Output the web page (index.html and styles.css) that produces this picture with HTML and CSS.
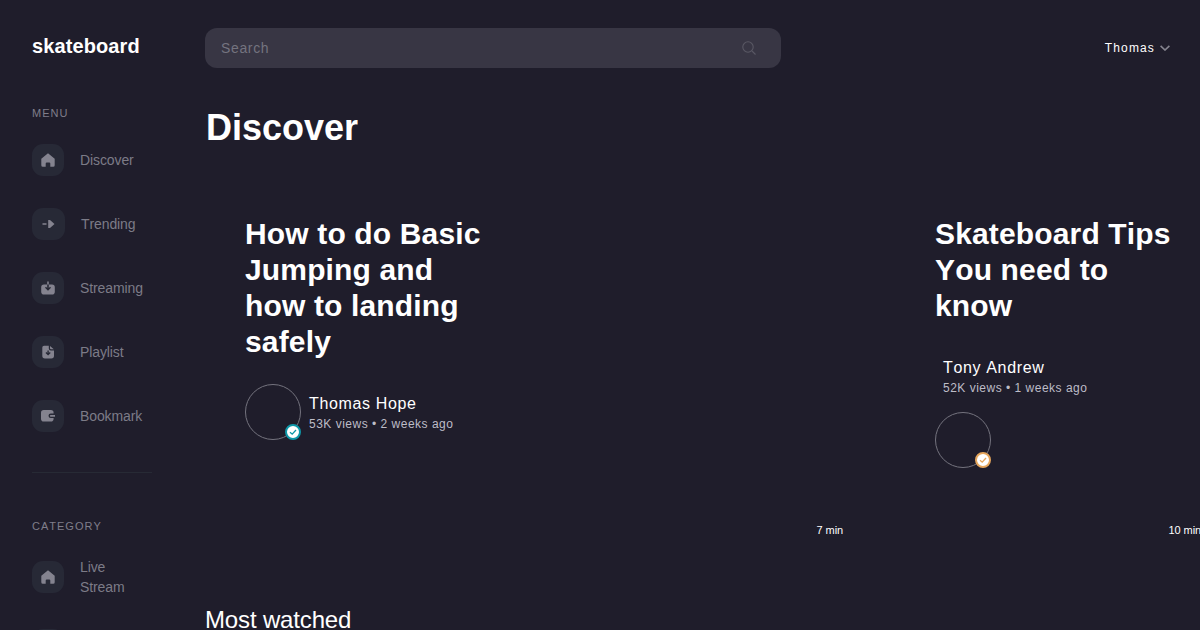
FILE: index.html
```html
<!DOCTYPE html>
<html lang="en">

<head>
    <meta charset="UTF-8">
    <meta name="viewport" content="width=device-width, initial-scale=1.0">
    <title>skateboard</title>
    <link rel="stylesheet" href="styles.css">
</head>

<body>
    <div class="page">
        <aside class="sidebar">
            <div class="logo">skateboard</div>

            <div class="side-title">MENU</div>
            <ul class="side-menu">
                <li class="side-item">
                    <span class="side-icon">
                        <svg width="14" height="14" viewBox="0 0 14 14"><path d="M7 .3 13.700 5.800V12.200a1.500 1.500 0 0 1-1.500 1.500H9.300V10.500a1.100 1.100 0 0 0-1.100-1.100H5.800a1.100 1.100 0 0 0-1.100 1.100v3.200H1.800A1.500 1.500 0 0 1 .3 12.200V5.800z" /></svg>
                    </span>
                    Discover
                </li>
                <li class="side-item wide">
                    <span class="side-icon">
                        <svg width="14" height="14" viewBox="0 0 14 14"><path d="M.5 6.200h4v1.600h-4zM6.200 3h1.400a1 1 0 0 1 .7.300L12.500 7l-4.200 3.700a1 1 0 0 1-.7.300H6.200z" /></svg>
                    </span>
                    Trending
                </li>
                <li class="side-item">
                    <span class="side-icon">
                        <svg width="14" height="14" viewBox="0 0 14 14"><path d="M3 3.500H6.200V7L5 5.800 4 6.800 7 9.800 10 6.800 9 5.800 7.800 7V3.500H11A2.800 2.800 0 0 1 13.800 6.300V10.800A2.800 2.800 0 0 1 11 13.600H3A2.800 2.800 0 0 1 .2 10.800V6.300A2.800 2.800 0 0 1 3 3.500zM6.200 .4h1.600v3.100H6.200z" /></svg>
                    </span>
                    Streaming
                </li>
                <li class="side-item">
                    <span class="side-icon">
                        <svg width="14" height="14" viewBox="0 0 14 14"><path d="M3 .8H7.800V3.400A2 2 0 0 0 9.800 5.400H13V10.800A2.600 2.600 0 0 1 10.400 13.400H3.900A2.600 2.600 0 0 1 1.300 10.800V2.500A1.700 1.700 0 0 1 3 .8zM6.400 5.500V8L5.400 7 4.500 7.900 7.100 10.500 9.700 7.900 8.800 7 7.800 8V5.500zM9 .9 12.800 4.300H10A1 1 0 0 1 9 3.300z" /></svg>
                    </span>
                    Playlist
                </li>
                <li class="side-item">
                    <span class="side-icon">
                        <svg width="14" height="14" viewBox="0 0 14 14"><path fill-rule="evenodd" d="M2.800 1H9.800A2.800 2.800 0 0 1 12.600 3.800V4.500H9.800A2.300 2.300 0 0 0 9.800 9.100H12.600V9.800A2.800 2.800 0 0 1 9.800 12.600H2.800A2.800 2.800 0 0 1 0 9.800V3.800A2.800 2.800 0 0 1 2.800 1zM9.800 5.900H14V7.700H9.800A.9.9 0 0 1 9.800 5.900z" /></svg>
                    </span>
                    Bookmark
                </li>
            </ul>

            <div class="side-line"></div>

            <div class="side-title">CATEGORY</div>
            <ul class="side-menu">
                <li class="side-item">
                    <span class="side-icon">
                        <svg width="14" height="14" viewBox="0 0 14 14"><path d="M7 .3 13.700 5.800V12.200a1.500 1.500 0 0 1-1.500 1.500H9.300V10.500a1.100 1.100 0 0 0-1.100-1.100H5.800a1.100 1.100 0 0 0-1.100 1.100v3.200H1.800A1.500 1.500 0 0 1 .3 12.200V5.800z" /></svg>
                    </span>
                    <span class="side-text">Live Stream</span>
                </li>
                <li class="side-item">
                    <span class="side-icon"></span>
                </li>
            </ul>
        </aside>

        <main class="main">
            <header class="topbar">
                <div class="search">
                    <input type="text" class="search-input" placeholder="Search">
                    <svg class="search-icon" width="16" height="16" viewBox="0 0 16 16" fill="none" stroke="#595864" stroke-width="1.100"><circle cx="7" cy="7" r="5.200" /><path d="M11 11l3.500 3.500" /></svg>
                </div>
                <div class="user">
                    Thomas
                    <svg width="10" height="6" viewBox="0 0 10 6" fill="none" stroke="#85848f" stroke-width="1.600"><path d="M.6.8 5 5 9.400.8" /></svg>
                </div>
            </header>

            <h1 class="page-title">Discover</h1>

            <section class="cards">
                <article class="card card-first">
                    <h2 class="card-title">How to do Basic Jumping and how to landing safely</h2>
                    <div class="author">
                        <div class="avatar">
                            <span class="badge badge-teal">
                                <svg width="8" height="8" viewBox="0 0 8 8" fill="none" stroke="#0e97a8" stroke-width="1.300"><path d="M1 4.200 3.200 6.200 7 2" /></svg>
                            </span>
                        </div>
                        <div class="author-text">
                            <div class="author-name">Thomas Hope</div>
                            <div class="author-meta">53K views • 2 weeks ago</div>
                        </div>
                    </div>
                    <span class="time">7 min</span>
                </article>

                <article class="card card-second">
                    <h2 class="card-title">Skateboard Tips You need to know</h2>
                    <div class="author author-stacked">
                        <div class="author-text">
                            <div class="author-name">Tony Andrew</div>
                            <div class="author-meta">52K views • 1 weeks ago</div>
                        </div>
                        <div class="avatar">
                            <span class="badge badge-orange">
                                <svg width="8" height="8" viewBox="0 0 8 8" fill="none" stroke="#e5a55c" stroke-width="1.300"><path d="M1 4.200 3.200 6.200 7 2" /></svg>
                            </span>
                        </div>
                    </div>
                    <span class="time">10 min</span>
                </article>
            </section>

            <h2 class="section-title">Most watched</h2>
        </main>
    </div>
</body>

</html>
```

FILE: styles.css
```css
* {
    box-sizing: border-box;
}

body {
    margin: 0;
    height: 630px;
    overflow: hidden;
    background-color: #1f1d2b;
    font-family: "Liberation Sans", Arial, sans-serif;
    font-kerning: none;
    color: #fff;
}

.page {
    display: flex;
    height: 630px;
    overflow: hidden;
}

.sidebar {
    flex: 0 0 205px;
    padding: 35px 53px 0 32px;
}

.logo {
    font-size: 20px;
    line-height: 23px;
    font-weight: bold;
    letter-spacing: .1px;
}

.side-title {
    margin-top: 49px;
    font-size: 11px;
    line-height: 13px;
    letter-spacing: 1px;
    color: #7f7e8a;
}

.side-menu {
    list-style: none;
    margin: 24px 0 0;
    padding: 0;
}

.side-item {
    display: flex;
    align-items: center;
    gap: 16px;
    margin-bottom: 32px;
    font-size: 14px;
    line-height: 20px;
    letter-spacing: -.1px;
    color: #7c7b87;
}

.side-item.wide .side-icon {
    flex-basis: 33px;
}

.side-icon {
    flex: 0 0 32px;
    height: 32px;
    display: flex;
    align-items: center;
    justify-content: center;
    border-radius: 11px;
    background-color: #272936;
}

.side-icon svg {
    fill: #84838f;
}

.side-text {
    width: 60px;
}

.side-line {
    height: 1px;
    margin-top: 40px;
    background-color: #272a35;
}

.side-line + .side-title {
    margin-top: 47px;
}

.side-line + .side-title + .side-menu {
    margin-top: 24px;
}

.main {
    flex: 1;
    min-width: 0;
    padding-top: 28px;
}

.topbar {
    display: flex;
    align-items: center;
    justify-content: space-between;
    padding-right: 30px;
}

.search {
    display: flex;
    align-items: center;
    width: 576px;
    height: 40px;
    padding: 0 24px 0 16px;
    border-radius: 12px;
    background-color: #383644;
}

.search-input {
    flex: 1;
    border: none;
    outline: none;
    padding: 0;
    background: transparent;
    font-family: inherit;
    font-size: 14px;
    letter-spacing: .65px;
    color: #fff;
}

.search-input::placeholder {
    color: #74737f;
    opacity: 1;
}

.user {
    display: flex;
    align-items: center;
    gap: 5px;
    font-size: 12px;
    letter-spacing: 1.15px;
}

.page-title {
    margin: 39px 0 0 1px;
    font-size: 36px;
    line-height: 42px;
}

.cards {
    display: flex;
    margin-top: 67px;
    height: 390px;
}

.card {
    position: relative;
    flex: none;
    padding: 0 40px;
}

.card-first {
    width: 690px;
}

.card-second {
    width: 358px;
}

.card-title {
    width: 244px;
    margin: 0;
    font-size: 30px;
    line-height: 36px;
    letter-spacing: .15px;
}

.author {
    display: flex;
    align-items: center;
    gap: 8px;
    margin-top: 24px;
}

.author-text {
    padding-top: 2px;
}

.author-stacked {
    display: block;
    margin-top: 34px;
}

.author-stacked .author-text {
    padding: 0 0 0 8px;
}

.author-stacked .avatar {
    margin-top: 16px;
}

.avatar {
    position: relative;
    width: 56px;
    height: 56px;
    border: 1px solid #74737e;
    border-radius: 50%;
}

.badge {
    position: absolute;
    right: -1px;
    bottom: -1px;
    display: flex;
    align-items: center;
    justify-content: center;
    width: 16px;
    height: 16px;
    border-radius: 50%;
    background-color: #fff;
}

.badge-teal {
    border: 2px solid #0e97a8;
}

.badge-orange {
    border: 2px solid #e5a55c;
}

.author-name {
    font-size: 16px;
    line-height: 20px;
    letter-spacing: .65px;
}

.author-meta {
    margin-top: 2px;
    font-size: 12px;
    line-height: 16px;
    letter-spacing: .5px;
    color: #bdbcc7;
}

.time {
    position: absolute;
    right: 52px;
    top: 308px;
    font-size: 11px;
    line-height: 13px;
    letter-spacing: -.1px;
}

.section-title {
    margin: 0;
    font-size: 24px;
    line-height: 28px;
    font-weight: normal;
    letter-spacing: -.15px;
}
```
